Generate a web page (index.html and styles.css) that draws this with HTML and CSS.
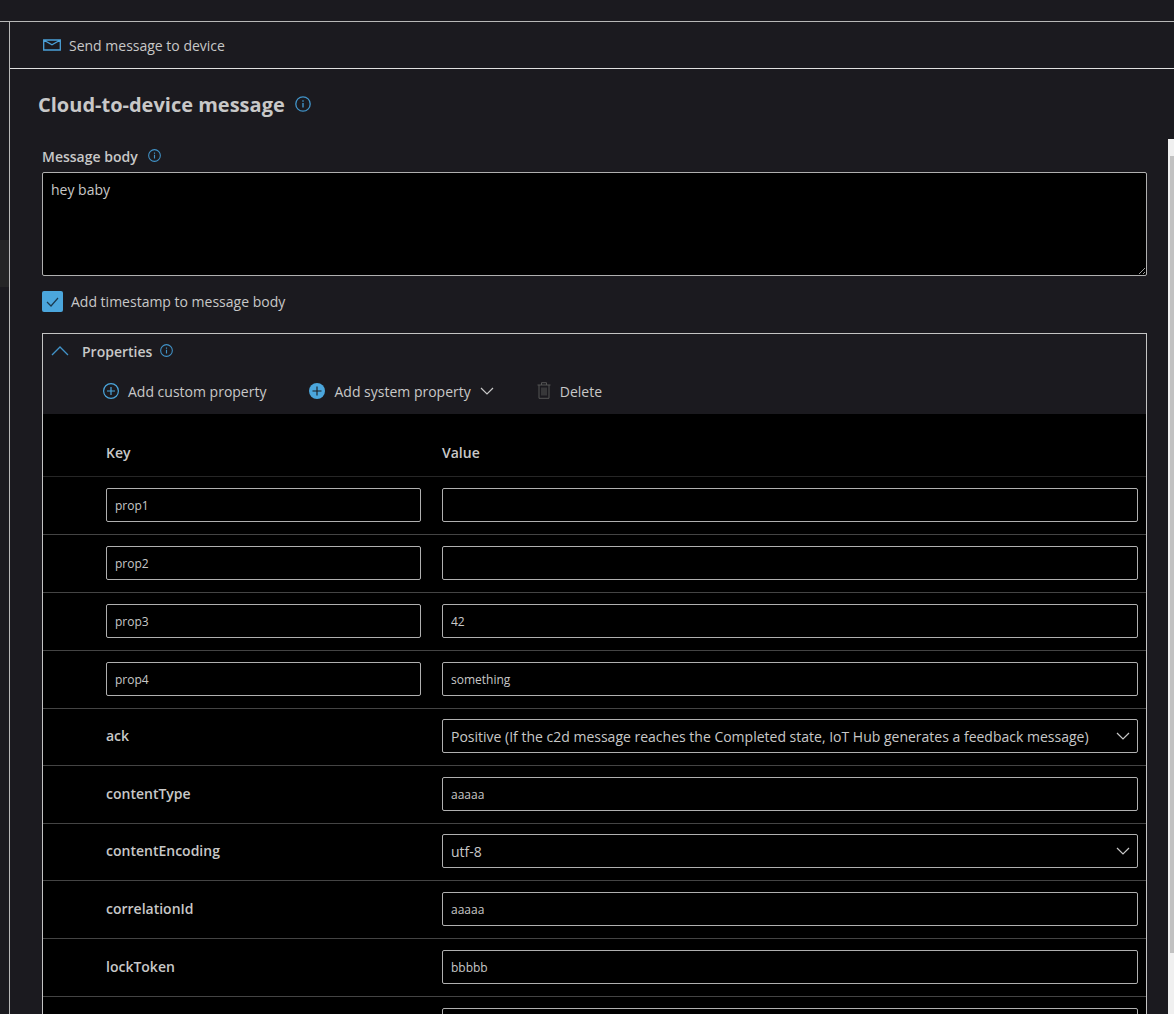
FILE: index.html
```html
<!DOCTYPE html>
<html lang="en">
<head>
    <meta charset="UTF-8">
    <meta name="viewport" content="width=device-width, initial-scale=1.0">
    <title>Cloud-to-device message</title>
    <link rel="stylesheet" href="styles.css">
</head>
<body>
    <svg class="sprite" aria-hidden="true">
        <symbol id="info" viewBox="0 0 16 16">
            <circle cx="8" cy="8" r="7.2" fill="none" stroke="currentColor" stroke-width="1.3"/>
            <path d="M8 7v4.6M8 4.2v1.5" fill="none" stroke="currentColor" stroke-width="1.4"/>
        </symbol>
        <symbol id="chevron" viewBox="0 0 14 8">
            <path d="M1 1l6 6 6-6" fill="none" stroke="currentColor" stroke-width="1.2"/>
        </symbol>
    </svg>

    <div class="topbar"></div>
    <div class="shell">
        <nav class="rail"><div class="rail-item"></div></nav>
        <main class="main">
            <div class="command-bar">
                <button class="command">
                    <svg class="mail" viewBox="0 0 18 12"><path d="M.7 1h16.6v10H.7zM1 1.2l8 4.6 8-4.6" fill="none" stroke="currentColor" stroke-width="1.3"/></svg>
                    Send message to device
                </button>
            </div>
            <div class="title">
                <h1>Cloud-to-device message</h1>
                <svg class="info-large"><use href="#info"/></svg>
            </div>
            <div class="scroller">
                <form class="content">
                    <div class="field-label">
                        <label for="body">Message body</label>
                        <svg class="info"><use href="#info"/></svg>
                    </div>
                    <textarea id="body" class="message">hey baby</textarea>
                    <label class="check"><input type="checkbox" checked>Add timestamp to message body</label>

                    <section class="panel">
                        <div class="panel-head">
                            <button type="button" class="toggle">
                                <svg class="collapse" viewBox="0 0 18 10"><path d="M1 9l8-8 8 8" fill="none" stroke="currentColor" stroke-width="1.3"/></svg>
                                Properties
                                <svg class="info"><use href="#info"/></svg>
                            </button>
                            <div class="actions">
                                <button type="button" class="command">
                                    <svg class="plus" viewBox="0 0 16 16"><circle cx="8" cy="8" r="7.4" fill="none" stroke="currentColor" stroke-width="1.2"/><path d="M8 4v8M4 8h8" stroke="currentColor" stroke-width="1.2"/></svg>
                                    Add custom property
                                </button>
                                <button type="button" class="command">
                                    <svg class="plus" viewBox="0 0 16 16"><circle cx="8" cy="8" r="8" fill="currentColor"/><path d="M8 3.5v9M3.5 8h9" stroke="#1b1a1f" stroke-width="1.1"/></svg>
                                    Add system property
                                    <svg class="chevron"><use href="#chevron"/></svg>
                                </button>
                                <button type="button" class="command">
                                    <svg class="trash" viewBox="0 0 14 17"><path d="M.5 3h13M4.5 3V.7h5V3M2 3v13.3h10V3M5 5.5v8M7 5.5v8M9 5.5v8" fill="none" stroke="currentColor"/></svg>
                                    Delete
                                </button>
                            </div>
                        </div>
                        <table class="props">
                            <thead>
                                <tr><th class="col-select"></th><th class="col-key">Key</th><th>Value</th></tr>
                            </thead>
                            <tbody>
                                <tr>
                                    <td></td>
                                    <td><input type="text" aria-label="Key" value="prop1"></td>
                                    <td><input type="text" aria-label="Value"></td>
                                </tr>
                                <tr>
                                    <td></td>
                                    <td><input type="text" aria-label="Key" value="prop2"></td>
                                    <td><input type="text" aria-label="Value"></td>
                                </tr>
                                <tr>
                                    <td></td>
                                    <td><input type="text" aria-label="Key" value="prop3"></td>
                                    <td><input type="text" aria-label="Value" value="42"></td>
                                </tr>
                                <tr>
                                    <td></td>
                                    <td><input type="text" aria-label="Key" value="prop4"></td>
                                    <td><input type="text" aria-label="Value" value="something"></td>
                                </tr>
                                <tr class="row-select">
                                    <td></td>
                                    <td><label for="ack">ack</label></td>
                                    <td>
                                        <div class="dropdown">
                                            <select id="ack"><option>Positive (If the c2d message reaches the Completed state, IoT Hub generates a feedback message)</option></select>
                                            <svg class="chevron"><use href="#chevron"/></svg>
                                        </div>
                                    </td>
                                </tr>
                                <tr>
                                    <td></td>
                                    <td><label for="contentType">contentType</label></td>
                                    <td><input type="text" id="contentType" value="aaaaa"></td>
                                </tr>
                                <tr class="row-select">
                                    <td></td>
                                    <td><label for="contentEncoding">contentEncoding</label></td>
                                    <td>
                                        <div class="dropdown">
                                            <select id="contentEncoding"><option>utf-8</option></select>
                                            <svg class="chevron"><use href="#chevron"/></svg>
                                        </div>
                                    </td>
                                </tr>
                                <tr>
                                    <td></td>
                                    <td><label for="correlationId">correlationId</label></td>
                                    <td><input type="text" id="correlationId" value="aaaaa"></td>
                                </tr>
                                <tr>
                                    <td></td>
                                    <td><label for="lockToken">lockToken</label></td>
                                    <td><input type="text" id="lockToken" value="bbbbb"></td>
                                </tr>
                                <tr>
                                    <td></td>
                                    <td></td>
                                    <td><input type="text" aria-label="Value"></td>
                                </tr>
                            </tbody>
                        </table>
                    </section>
                </form>
                <div class="scrollbar"><div class="thumb"></div></div>
            </div>
        </main>
    </div>
</body>
</html>
```
FILE: styles.css
```css
* {
    box-sizing: border-box;
}
body {
    display: flex;
    flex-direction: column;
    height: 100vh;
    margin: 0;
    overflow: hidden;
    background: #1b1a1f;
    color: #c8c8c8;
    font-family: "Segoe UI", "Open Sans", "Noto Sans", sans-serif;
    font-size: 14px;
    line-height: 20px;
}
button, input, select, textarea {
    font: inherit;
    color: inherit;
}
svg {
    flex: none;
}
.sprite {
    position: absolute;
    width: 0;
    height: 0;
}
.topbar {
    flex: none;
    height: 22px;
    border-bottom: 1px solid #b8b8b8;
}
.shell {
    display: flex;
    flex: 1;
    min-height: 0;
}
.rail {
    width: 10px;
    padding-top: 218px;
    border-right: 1px solid #b8b8b8;
}
.rail-item {
    height: 47px;
    background: #252526;
}
.main {
    display: flex;
    flex: 1;
    flex-direction: column;
    min-width: 0;
}
.command-bar {
    display: flex;
    flex: none;
    height: 47px;
    padding: 2px 0 0 33px;
    border-bottom: 1px solid #e0e0e0;
}
.command {
    display: flex;
    align-items: center;
    gap: 8px;
    padding: 0;
    border: none;
    background: none;
    white-space: nowrap;
}
.command svg {
    margin-bottom: 3px;
}
.mail {
    width: 18px;
    height: 12px;
    color: #4ba0d8;
}
.title {
    display: flex;
    flex: none;
    align-items: center;
    gap: 10px;
    height: 70px;
    padding: 2px 0 0 28px;
}
h1 {
    margin: 0;
    font-size: 20px;
    line-height: 28px;
}
.info-large {
    width: 16px;
    height: 16px;
    margin-bottom: 2px;
    color: #4193c8;
}
.info {
    width: 13px;
    height: 13px;
    margin-bottom: 3px;
    color: #4193c8;
}
.scroller {
    display: flex;
    flex: 1;
    min-height: 0;
}
.content {
    flex: 1;
    min-width: 0;
    padding: 8px 21px 0 32px;
    overflow: hidden;
}
.scrollbar {
    width: 6px;
    padding: 17px 0 61px 2px;
    background: #f0f0f0;
}
.thumb {
    height: 100%;
    background: #c1c1c1;
}
.field-label {
    display: flex;
    align-items: center;
    gap: 10px;
    height: 25px;
    padding-bottom: 6px;
    font-weight: 600;
}
.message {
    display: block;
    width: 100%;
    height: 104px;
    padding: 7px 8px;
    border: 1px solid #b0b0b0;
    border-radius: 2px;
    background: #000;
}
.check {
    display: flex;
    align-items: center;
    gap: 8px;
    margin: 15px 0 21px;
}
.check input {
    appearance: none;
    width: 21px;
    height: 21px;
    margin: 0;
    border-radius: 2px;
    background: #4ba6dc url("data:image/svg+xml,%3Csvg xmlns='http://www.w3.org/2000/svg' viewBox='0 0 21 21'%3E%3Cpath d='M5 11l4 4 7-8' fill='none' stroke='%231b3a4f' stroke-width='1.2'/%3E%3C/svg%3E");
}
.panel {
    border: 1px solid #c4c4c4;
    background: #000;
}
.panel-head {
    height: 80px;
    background: #1b1a1f;
}
.toggle {
    display: flex;
    align-items: center;
    gap: 8px;
    height: 36px;
    padding: 0 8px;
    border: none;
    background: none;
    font-weight: 600;
}
.collapse {
    width: 18px;
    height: 10px;
    margin: 0 5px 2px 0;
    color: #4193c8;
}
.actions {
    display: flex;
    gap: 43px;
    height: 44px;
    padding-left: 60px;
}
.actions .command {
    gap: 9px;
}
.plus {
    width: 16px;
    height: 16px;
    color: #4ba6dc;
}
.chevron {
    width: 14px;
    height: 8px;
}
.trash {
    width: 14px;
    height: 17px;
    color: #555;
}
.props {
    width: 100%;
    table-layout: fixed;
    border-collapse: separate;
    border-spacing: 0;
}
.col-select {
    width: 53px;
}
.col-key {
    width: 336px;
}
th {
    height: 63px;
    padding: 15px 10px 0;
    border-bottom: 1px solid #262626;
    text-align: left;
    font-weight: 600;
}
td {
    height: 58px;
    padding: 0 8px 2px 10px;
    border-bottom: 1px solid #444;
    font-weight: 600;
}
td:nth-child(2) {
    padding-right: 11px;
}
.row-select td {
    height: 57px;
}
.props input, .dropdown select {
    display: block;
    width: 100%;
    height: 34px;
    padding: 1px 8px 0;
    border: 1px solid #b0b0b0;
    border-radius: 2px;
    background: #000;
    font-size: 12px;
    font-weight: 400;
}
.dropdown {
    position: relative;
}
.dropdown select {
    appearance: none;
    padding-top: 2px;
    font-size: 14px;
}
.dropdown .chevron {
    position: absolute;
    top: 13px;
    right: 8px;
    pointer-events: none;
}
```
